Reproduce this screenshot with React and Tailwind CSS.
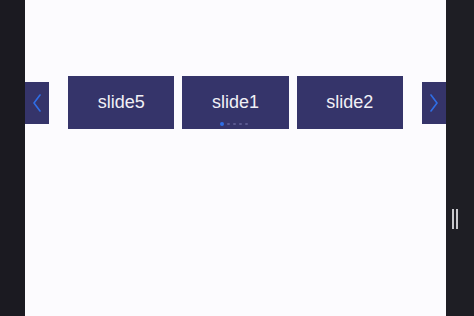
const Chevron = ({ dir }) => (
  <svg width="10" height="18" viewBox="0 0 10 18" fill="none">
    <path
      d={dir === 'left' ? 'M8 1L2 9l6 8' : 'M2 1l6 8-6 8'}
      stroke="#2f6ee6"
      strokeWidth="1.6"
      strokeLinecap="round"
      strokeLinejoin="round"
    />
  </svg>
);

const slides = ['slide5', 'slide1', 'slide2'];

export default function App() {
  return (
    <div className="flex h-[316px] w-[474px] font-['Liberation_Sans',Arial,sans-serif]">
      <div className="w-[25px] bg-[#1b1a21]" />
      <div className="flex-1 bg-[#fcfbfe] pt-[76px]">
        <div className="flex items-center">
          <button className="flex h-[42px] w-[24px] items-center justify-center bg-[#35346a]">
            <Chevron dir="left" />
          </button>
          <div className="ml-[19px] mr-[19px] flex flex-1 gap-[8px]">
            {slides.map((s, i) => (
              <div
                key={s}
                className="relative flex h-[53px] flex-1 items-center justify-center bg-[#35346a] text-[18px] text-[#f1f0f6]"
              >
                {s}
                {i === 1 && (
                  <div className="absolute left-[38px] top-[46px] flex items-center gap-[3px]">
                    <span className="h-[4px] w-[4px] rounded-full bg-[#2f6ee6]" />
                    <span className="h-[2px] w-[3px] rounded-full bg-[#5a5990]" />
                    <span className="h-[2px] w-[3px] rounded-full bg-[#5a5990]" />
                    <span className="h-[2px] w-[3px] rounded-full bg-[#5a5990]" />
                    <span className="h-[2px] w-[3px] rounded-full bg-[#5a5990]" />
                  </div>
                )}
              </div>
            ))}
          </div>
          <button className="flex h-[42px] w-[24px] items-center justify-center bg-[#35346a]">
            <Chevron dir="right" />
          </button>
        </div>
      </div>
      <div className="flex w-[28px] items-center bg-[#1e1e24] pl-[6px]">
        <div className="mt-[122px] flex gap-[2px]">
          <span className="h-[20px] w-[2px] bg-[#c8c8cc]" />
          <span className="h-[20px] w-[2px] bg-[#c8c8cc]" />
        </div>
      </div>
    </div>
  );
}
